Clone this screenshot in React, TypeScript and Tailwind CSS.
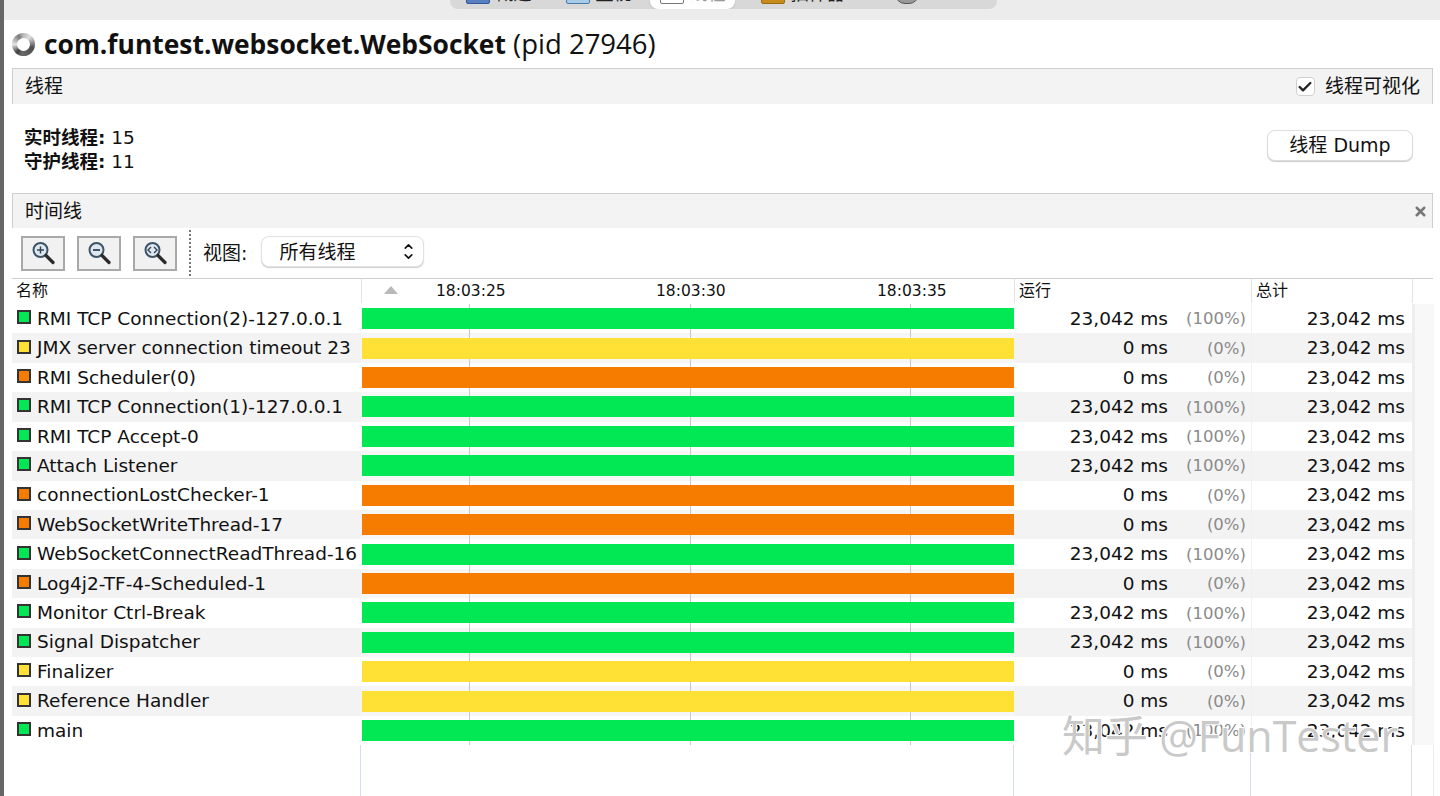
import { Check, ChevronDown, ChevronUp, X } from 'lucide-react'

type ThreadState = 'run' | 'wait' | 'park'

type ThreadRow = {
  name: string
  state: ThreadState
}

const threads: ThreadRow[] = [
  { name: 'RMI TCP Connection(2)-127.0.0.1', state: 'run' },
  { name: 'JMX server connection timeout 23', state: 'wait' },
  { name: 'RMI Scheduler(0)', state: 'park' },
  { name: 'RMI TCP Connection(1)-127.0.0.1', state: 'run' },
  { name: 'RMI TCP Accept-0', state: 'run' },
  { name: 'Attach Listener', state: 'run' },
  { name: 'connectionLostChecker-1', state: 'park' },
  { name: 'WebSocketWriteThread-17', state: 'park' },
  { name: 'WebSocketConnectReadThread-16', state: 'run' },
  { name: 'Log4j2-TF-4-Scheduled-1', state: 'park' },
  { name: 'Monitor Ctrl-Break', state: 'run' },
  { name: 'Signal Dispatcher', state: 'run' },
  { name: 'Finalizer', state: 'wait' },
  { name: 'Reference Handler', state: 'wait' },
  { name: 'main', state: 'run' },
]

const swatch: Record<ThreadState, string> = {
  run: 'bg-[#02e854]',
  wait: 'bg-[#ffe135]',
  park: 'bg-[#f67c00]',
}

const ZoomButton = ({ glyph }: { glyph: 'in' | 'out' | 'fit' }) => (
  <button
    type="button"
    className="w-[44px] h-[35px] flex items-center justify-center bg-[#f1f1f1] border-2 border-[#a9a9a9]"
  >
    <svg width="26" height="26" viewBox="0 0 26 26">
      <circle cx="10.5" cy="10" r="7" fill="#dfe8f0" stroke="#3d5468" strokeWidth="2" />
      <path d="M16 15.5l7 7" stroke="#2b2b2b" strokeWidth="3.2" strokeLinecap="round" />
      {glyph === 'in' && <path d="M7 10h7M10.5 6.5v7" stroke="#2f4558" strokeWidth="1.5" />}
      {glyph === 'out' && <path d="M7 10h7" stroke="#2f4558" strokeWidth="1.8" />}
      {glyph === 'fit' && <path d="M9 7l-3 3 3 3M12 7l3 3-3 3" fill="none" stroke="#2f4558" strokeWidth="1.4" />}
    </svg>
  </button>
)

const Spinner = () => (
  <div className="w-[23px] h-[23px] shrink-0 rounded-full flex items-center justify-center bg-[conic-gradient(#bdbdbd_0deg,#e0e0e0_40deg,#4d4d4d_110deg,#6a6a6a_190deg,#3f3f3f_220deg,#e4e4e4_270deg,#7b7b7b_330deg,#bdbdbd_360deg)]">
    <div className="w-[13px] h-[13px] rounded-full bg-white" />
  </div>
)

const TopTab = ({ label, width, active, icon }: { label: string; width: string; active?: boolean; icon: string }) => (
  <div
    className={`${width} flex items-end justify-center gap-1.5 h-full overflow-hidden ${
      active ? 'bg-white rounded-b-lg shadow-sm text-[#999]' : 'text-[#222]'
    }`}
  >
    <span className={`w-6 h-5 border ${icon} rounded-[2px] mb-[5px]`} />
    <span className="text-[18px] leading-[22px] mb-[4px]">{label}</span>
  </div>
)

export default function App() {
  return (
    <div className="font-['DejaVu_Sans','Noto_Sans_CJK_SC',sans-serif] relative w-[1440px] h-[796px] overflow-hidden bg-white flex text-[#111]">
      <div className="w-1 bg-[#666] shrink-0" />
      <div className="flex-1 flex flex-col min-w-0">
        {/* top toolbar, cut off by the screenshot */}
        <div className="bg-[#ececec] shrink-0 h-[20px] pl-[446px]">
          <div className="w-[547px] h-[9px] bg-[#d8d8d8] rounded-b-lg flex items-end overflow-hidden">
            <TopTab label="概述" width="w-[97px]" icon="border-[#33559a] bg-[#5a7fc0]" />
            <TopTab label="监视" width="w-[103px]" icon="border-[#4a7aa8] bg-[#a8cbe8]" />
            <TopTab label="线程" width="w-[85px]" icon="border-[#777] bg-white" active />
            <TopTab label="抽样器" width="w-[135px]" icon="border-[#9a6a10] bg-[#c98a1c]" />
            <TopTab label="" width="w-[80px]" icon="border-[#555] bg-[#999] rounded-full" />
          </div>
        </div>

        {/* title */}
        <div className="h-[48px] shrink-0 flex items-center pl-[8px] gap-[9px]">
          <Spinner />
          <h1 className="text-[27.5px] leading-none font-['Open_Sans','Noto_Sans_CJK_SC',sans-serif] whitespace-nowrap -mt-[1px]">
            <span className="font-bold text-[26.4px]">com.funtest.websocket.WebSocket</span>
            <span> (pid 27946)</span>
          </h1>
        </div>

        <div className="ml-[8px] mr-[7px] flex-1 flex flex-col min-h-0">
          {/* threads section */}
          <div className="h-[36px] shrink-0 bg-[#f3f3f3] border-t border-x border-[#cfcfcf] flex items-center justify-between pl-[12px] pr-[12px] text-[19px]">
            <span>线程</span>
            <label className="flex items-center gap-[10px]">
              <span className="w-[19px] h-[19px] bg-white border border-[#d0d0d0] rounded-[4px] flex items-center justify-center">
                <Check size={16} strokeWidth={3.5} className="text-[#222]" />
              </span>
              <span>线程可视化</span>
            </label>
          </div>

          <div className="h-[89px] shrink-0 flex items-center justify-between pl-[12px] pr-[20px]">
            <div className="text-[18.5px] leading-[24px] mt-[2px]">
              <div><b>实时线程:</b> 15</div>
              <div><b>守护线程:</b> 11</div>
            </div>
            <button
              type="button"
              className="w-[146px] h-[31px] bg-white border border-[#ddd] rounded-lg shadow-[0_1px_1px_rgba(0,0,0,0.2)] text-[19px] -mt-[6px]"
            >
              线程 Dump
            </button>
          </div>

          {/* timeline section */}
          <div className="h-[35px] shrink-0 bg-[#f3f3f3] border-t border-x border-[#cfcfcf] flex items-center justify-between pl-[12px] pr-[4px] text-[19px]">
            <span>时间线</span>
            <X size={15} strokeWidth={4} className="text-[#777]" />
          </div>

          <div className="h-[50px] shrink-0 flex items-center pl-[9px] gap-[12px]">
            <ZoomButton glyph="in" />
            <ZoomButton glyph="out" />
            <ZoomButton glyph="fit" />
            <div className="h-[46px] border-l-2 border-dotted border-[#777]" />
            <span className="text-[19px]">视图:</span>
            <div className="w-[163px] h-[31px] ml-[2px] -mt-[3px] bg-white border border-[#e2e2e2] rounded-lg shadow-[0_1px_1px_rgba(0,0,0,0.2)] flex items-center justify-between pl-[17px] pr-[8px] text-[19px]">
              <span className="pt-[2px]">所有线程</span>
              <span className="flex flex-col -space-y-[3px]">
                <ChevronUp size={13} strokeWidth={3} />
                <ChevronDown size={13} strokeWidth={3} />
              </span>
            </div>
          </div>

          {/* table header */}
          <div className="h-[26px] shrink-0 border-t border-[#cfcfcf] grid grid-cols-[349px_653px_237px_161px_22px] text-[15.5px] leading-[24px]">
            <div className="pl-[4px] text-[16px]">名称</div>
            <div className="border-l border-[#e4e4e4] relative mb-[3px]">
              <svg width="14" height="8" viewBox="0 0 14 8" className="absolute left-[22px] top-[7px]">
                <path d="M7 0l7 8H0z" fill="#b9b9b9" />
              </svg>
              <span className="absolute left-[74px] top-0">18:03:25</span>
              <span className="absolute left-[294px] top-0">18:03:30</span>
              <span className="absolute left-[515px] top-0">18:03:35</span>
            </div>
            <div className="border-l border-[#e4e4e4] pl-[4px] mb-[3px] text-[16px]">运行</div>
            <div className="border-l border-[#e4e4e4] pl-[4px] mb-[3px] text-[16px]">总计</div>
            <div className="border-l border-[#e4e4e4] mb-[3px]" />
          </div>

          {/* table body */}
          <div className="flex-1 min-h-0 flex flex-col">
            {threads.map((t, i) => (
              <div
                key={t.name}
                className="h-[29.43px] shrink-0 grid grid-cols-[349px_653px_237px_161px_22px] items-center text-[18.5px]"
              >
                <div className={`h-full flex items-center pl-[5px] gap-[6px] whitespace-nowrap overflow-hidden ${i % 2 === 1 ? 'bg-[#f3f3f3]' : ''}`}>
                  <span className={`w-[14px] h-[14px] shrink-0 border-2 border-[#333] -mt-[3px] ${swatch[t.state]}`} />
                  <span>{t.name}</span>
                </div>
                <div className={`h-full flex items-center pl-[1px] relative ${i % 2 === 1 ? 'bg-[#f6f6f6]' : ''}`}>
                  <span className="absolute left-[108px] top-0 bottom-0 w-px bg-[#c9c9c9]" />
                  <span className="absolute left-[329px] top-0 bottom-0 w-px bg-[#c9c9c9]" />
                  <span className="absolute left-[549px] top-0 bottom-0 w-px bg-[#c9c9c9]" />
                  <div className={`relative w-full h-[21px] ${swatch[t.state]}`} />
                </div>
                <div className={`h-full flex justify-end items-center pr-[5px] ${i % 2 === 1 ? 'bg-[#f3f3f3]' : ''}`}>
                  <span>{t.state === 'run' ? '23,042 ms' : '0 ms'}</span>
                  <span className="w-[78px] text-right text-[#8a8a8a] text-[16.5px] mt-[2px]">{t.state === 'run' ? '(100%)' : '(0%)'}</span>
                </div>
                <div className={`h-full flex items-center justify-end pr-[7px] border-l border-[#f0f0f0] ${i % 2 === 1 ? 'bg-[#f3f3f3]' : ''}`}>23,042 ms</div>
                <div className="h-full bg-[#f8f8f8] border-l-[3px] border-[#eeeeee]" />
              </div>
            ))}
            <div className="flex-1 grid grid-cols-[349px_653px_237px_161px_22px]">
              <div className="border-r border-[#d5deea]" />
              <div className="border-r border-[#d5deea]" />
              <div className="border-r border-[#d5deea]" />
              <div className="border-r border-[#d5deea]" />
              <div className="border-r border-[#ececec]" />
            </div>
          </div>
        </div>
      </div>

      {/* watermark */}
      <div className="absolute left-[1062px] top-[708px] text-[43px] leading-[56px] text-[#c9c9c9] whitespace-nowrap font-['Open_Sans','Noto_Sans_CJK_SC',sans-serif] [-webkit-text-stroke:2px_white] [paint-order:stroke_fill]">
        知乎 @FunTester
      </div>
    </div>
  )
}
